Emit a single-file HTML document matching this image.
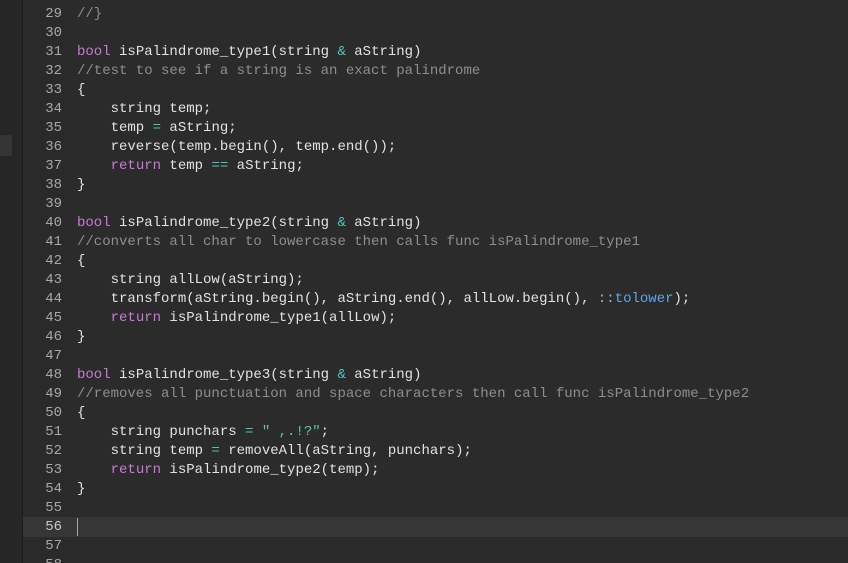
<!DOCTYPE html>
<html><head><style>
html,body{margin:0;width:848px;height:563px;overflow:hidden;}
body{background:#2b2b2b;font-family:"Liberation Mono",monospace;font-size:14px;position:relative;}
#side{position:absolute;left:0;top:0;width:22px;height:563px;background:#262626;border-right:1px solid #1c1c1c;}
#tab{position:absolute;left:0;top:135px;width:12px;height:21px;background:#353535;border-radius:0 2px 2px 0;}
#gut{position:absolute;left:23px;top:0;width:50px;height:563px;background:#2a2a2a;}
#hl{position:absolute;left:23px;top:517px;width:825px;height:20px;background:#363636;}
#cur{position:absolute;left:77px;top:518px;width:1px;height:18px;background:#aaa;}
.l{position:absolute;left:0;height:19px;line-height:19px;white-space:pre;}
.n{position:absolute;left:23px;width:39px;text-align:right;color:#a8a8a8;}
.c{position:absolute;left:77px;color:#e2e2e2;}
.k{color:#c77ad4}.m{color:#8e8e8e}.o{color:#4ec5be}.s{color:#5fc4a2}.b{color:#5fa6e8}.g{color:#b0b0b0}
</style></head><body>
<div id="side"></div><div id="tab"></div><div id="gut"></div><div id="hl"></div><div id="cur"></div>
<div id="code"></div>
<script>
const L={
29:'<span class="m">//}</span>',
30:'',
31:'<span class="k">bool</span> isPalindrome_type1(string <span class="o">&amp;</span> aString)',
32:'<span class="m">//test to see if a string is an exact palindrome</span>',
33:'{',
34:'    string temp;',
35:'    temp <span class="o">=</span> aString;',
36:'    reverse(temp.begin(), temp.end());',
37:'    <span class="k">return</span> temp <span class="o">==</span> aString;',
38:'}',
39:'',
40:'<span class="k">bool</span> isPalindrome_type2(string <span class="o">&amp;</span> aString)',
41:'<span class="m">//converts all char to lowercase then calls func isPalindrome_type1</span>',
42:'{',
43:'    string allLow(aString);',
44:'    transform(aString.begin(), aString.end(), allLow.begin(), <span class="g">::</span><span class="b">tolower</span>);',
45:'    <span class="k">return</span> isPalindrome_type1(allLow);',
46:'}',
47:'',
48:'<span class="k">bool</span> isPalindrome_type3(string <span class="o">&amp;</span> aString)',
49:'<span class="m">//removes all punctuation and space characters then call func isPalindrome_type2</span>',
50:'{',
51:'    string punchars <span class="o">=</span> <span class="s">" ,.!?"</span>;',
52:'    string temp <span class="o">=</span> removeAll(aString, punchars);',
53:'    <span class="k">return</span> isPalindrome_type2(temp);',
54:'}',
55:'',56:'',57:'',58:''};
let h='';
for(let n=29;n<=58;n++){const t=5+(n-29)*19;
h+=`<div class="l n" style="top:${t}px;${n==56?'color:#c8c8c8':''}">${n}</div>`;
h+=`<div class="l c" style="top:${t}px">${L[n]}</div>`;}
document.getElementById('code').innerHTML=h;
</script>
</body></html>
